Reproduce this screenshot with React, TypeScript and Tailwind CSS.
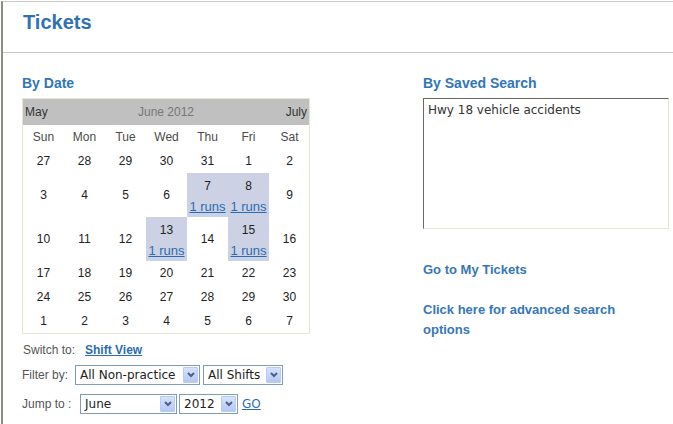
import React from 'react'

const sans = { fontFamily: '"Liberation Sans", Arial, sans-serif' }
const verdana = { fontFamily: '"DejaVu Sans", Verdana, sans-serif' }

type Cell = { d: number; runs?: boolean }

const weeks: Cell[][] = [
    [{ d: 27 }, { d: 28 }, { d: 29 }, { d: 30 }, { d: 31 }, { d: 1 }, { d: 2 }],
    [{ d: 3 }, { d: 4 }, { d: 5 }, { d: 6 }, { d: 7, runs: true }, { d: 8, runs: true }, { d: 9 }],
    [{ d: 10 }, { d: 11 }, { d: 12 }, { d: 13, runs: true }, { d: 14 }, { d: 15, runs: true }, { d: 16 }],
    [{ d: 17 }, { d: 18 }, { d: 19 }, { d: 20 }, { d: 21 }, { d: 22 }, { d: 23 }],
    [{ d: 24 }, { d: 25 }, { d: 26 }, { d: 27 }, { d: 28 }, { d: 29 }, { d: 30 }],
    [{ d: 1 }, { d: 2 }, { d: 3 }, { d: 4 }, { d: 5 }, { d: 6 }, { d: 7 }],
]

const dayNames = ['Sun', 'Mon', 'Tue', 'Wed', 'Thu', 'Fri', 'Sat']

function Select({ value, width }: { value: string; width: string }) {
    return (
        <div className={`${width} h-[20px] flex items-center border border-[#7f9db9] bg-white`}>
            <span className="flex-1 pl-[4px] text-[12px] text-[#222] leading-none" style={verdana}>
                {value}
            </span>
            <span className="w-[15px] h-[16px] mr-px flex items-center justify-center bg-gradient-to-b from-[#d6e2fd] to-[#b4c8f6] border border-[#b8cbf2] rounded-[1px]">
                <svg width="8" height="6" viewBox="0 0 8 6">
                    <path d="M1 1 L4 4 L7 1" stroke="#4d6185" strokeWidth="2" fill="none" />
                </svg>
            </span>
        </div>
    )
}

export default function App() {
    return (
        <div className="w-[673px] h-[424px] bg-white overflow-hidden pl-px pt-px" style={sans}>
            <div className="h-full border-l-2 border-l-[#8c8c84] border-t border-t-[#c8c8c8]">
                <div className="h-[51px] border-b border-[#c8c8c8] pl-[20px] pt-[9px]">
                    <h1 className="text-[20px] font-bold text-[#2f72b3] leading-[23px]">Tickets</h1>
                </div>

                <div className="flex pl-[19px] pt-[22px]">
                    <div className="w-[288px]">
                        <h2 className="text-[14px] font-bold text-[#2f76b8] leading-[16px] mb-[7px]">By Date</h2>

                        <div className="border border-[#e6e6d6] text-[12px] text-[#222]">
                            <div className="h-[26px] bg-[#c0c0c0] flex items-center px-[2px]" style={sans}>
                                <span className="flex-1 text-[#333]">May</span>
                                <span className="text-[#777]">June 2012</span>
                                <span className="flex-1 text-right text-[#333]">July</span>
                            </div>
                            <div className="grid grid-cols-[repeat(7,41px)]">
                                {dayNames.map((n) => (
                                    <div key={n} className="h-[24px] flex items-center justify-center text-[#4a4a4a]">
                                        {n}
                                    </div>
                                ))}
                                {weeks.map((w, wi) =>
                                    w.map((c, ci) => {
                                        const tall = wi === 1 || wi === 2
                                        return (
                                            <div
                                                key={`${wi}-${ci}`}
                                                className={`${tall ? 'h-[44px]' : 'h-[24px]'} flex flex-col items-center justify-center ${c.runs ? 'bg-[#ccd2e4]' : ''}`}
                                            >
                                                <span>{c.d}</span>
                                                {c.runs && (
                                                    <a href="#" className="text-[13px] text-[#2a6cb4] underline mt-[4px] leading-[15px]">
                                                        1 runs
                                                    </a>
                                                )}
                                            </div>
                                        )
                                    })
                                )}
                            </div>
                        </div>

                        <div className="mt-[7px] flex items-center text-[12px] text-[#555]">
                            <span className="pl-px">Switch to:</span>
                            <a href="#" className="ml-[10px] font-bold text-[#2a6cb4] underline">
                                Shift View
                            </a>
                        </div>
                        <div className="mt-[6px] flex items-center text-[12px] text-[#555]">
                            <span className="w-[53px]">Filter by:</span>
                            <Select value="All Non-practice" width="w-[125px]" />
                            <div className="w-[3px]" />
                            <Select value="All Shifts" width="w-[80px]" />
                        </div>
                        <div className="mt-[9px] flex items-center text-[12px] text-[#555]">
                            <span className="w-[58px]">Jump to :</span>
                            <Select value="June" width="w-[97px]" />
                            <div className="w-[2px]" />
                            <Select value="2012" width="w-[59px]" />
                            <a href="#" className="ml-[4px] text-[12px] text-[#2a6cb4] underline" style={verdana}>
                                GO
                            </a>
                        </div>
                    </div>

                    <div className="ml-[113px] w-[246px]">
                        <h2 className="text-[14px] font-bold text-[#2f76b8] leading-[16px] mb-[7px]">By Saved Search</h2>
                        <div className="h-[131px] border border-t-[#6a6a64] border-l-[#6a6a64] border-r-[#e6e6d6] border-b-[#e6e6d6] pl-[4px] pt-[2px]">
                            <div className="text-[12px] text-[#333]" style={verdana}>
                                Hwy 18 vehicle accidents
                            </div>
                        </div>
                        <a href="#" className="block mt-[31px] text-[13px] font-bold text-[#3577b8] leading-[20px]">
                            Go to My Tickets
                        </a>
                        <a href="#" className="block w-[232px] mt-[20px] text-[13px] font-bold text-[#3577b8] leading-[20px]">
                            Click here for advanced search options
                        </a>
                    </div>
                </div>
            </div>
        </div>
    )
}
